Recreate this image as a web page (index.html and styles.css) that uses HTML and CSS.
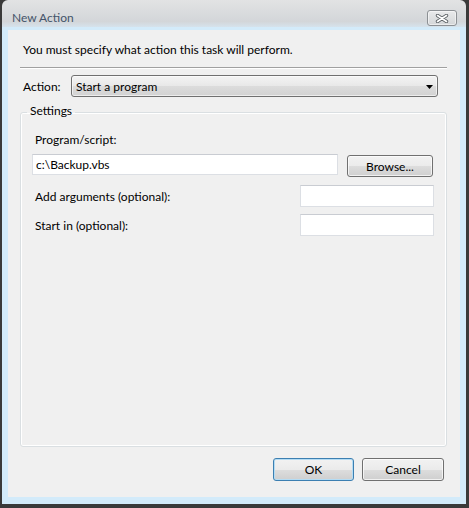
FILE: index.html
```html
<!DOCTYPE html>
<html lang="en">
<head>
<meta charset="utf-8">
<title>New Action</title>
<link rel="stylesheet" href="styles.css">
</head>
<body>
<div class="window">
  <div class="titlebar">
    <span class="title">New Action</span>
    <button class="close" aria-label="Close">
      <svg width="14" height="9" viewBox="0 0 14 9">
        <path d="M2.5 1.5 L11.5 7.5 M11.5 1.5 L2.5 7.5" stroke="#5f6468" stroke-width="3.4" stroke-linecap="round" fill="none"/>
        <path d="M2.5 1.5 L11.5 7.5 M11.5 1.5 L2.5 7.5" stroke="#ffffff" stroke-width="1.6" stroke-linecap="round" fill="none"/>
      </svg>
    </button>
  </div>
  <div class="frame">
    <div class="client">
      <p class="intro">You must specify what action this task will perform.</p>
      <hr class="sep">
      <div class="action-row">
        <span class="action-label">Action:</span>
        <div class="combo">
          <span>Start a program</span>
          <svg class="arrow" width="7" height="4" viewBox="0 0 7 4"><polygon points="0,0 7,0 3.5,4" fill="#000"/></svg>
        </div>
      </div>
      <fieldset class="group">
        <legend>Settings</legend>
        <div class="field-label">Program/script:</div>
        <div class="prog-row">
          <input class="input wide" type="text" value="c:\Backup.vbs">
          <button class="btn browse">Browse...</button>
        </div>
        <div class="opt-row">
          <span class="opt-label">Add arguments (optional):</span>
          <input class="input short" type="text" value="">
        </div>
        <div class="opt-row second">
          <span class="opt-label">Start in (optional):</span>
          <input class="input short" type="text" value="">
        </div>
      </fieldset>
      <div class="buttons">
        <button class="btn ok">OK</button>
        <button class="btn cancel">Cancel</button>
      </div>
    </div>
  </div>
</div>
</body>
</html>
```

FILE: styles.css
```css
html, body {
  margin: 0;
  padding: 0;
  background: #3a3a3a;
  height: 100%;
}

body {
  font-family: Lato, "Liberation Sans", sans-serif;
  font-size: 12px;
  line-height: 15px;
  color: #000;
}

.window {
  margin: 0 3px 0 2px;
  height: 504px;
  display: flex;
  flex-direction: column;
  border-radius: 6px 6px 0 0;
  overflow: hidden;
}

.titlebar {
  height: 27px;
  flex: none;
  display: flex;
  justify-content: space-between;
  align-items: flex-start;
  padding: 0 9px 0 10px;
  background: linear-gradient(#e2e3e4, #d3d6d9 80%, #d6e3ec);
  box-sizing: border-box;
}

.title {
  margin-top: 10px;
  color: #44546a;
  font-size: 12px;
}

.close {
  margin: 10px 0 0 0;
  width: 30px;
  height: 16px;
  padding: 0;
  border: 1px solid #8c9094;
  border-radius: 3px;
  background: linear-gradient(#e9eaeb, #d4d6d8);
  box-shadow: inset 0 0 0 1px rgba(255,255,255,0.5);
  display: flex;
  align-items: center;
  justify-content: center;
}

.close svg {
  display: block;
}

.frame {
  flex: 1;
  display: flex;
  padding: 3px 6px 7px 6px;
  background: #d3ebfa;
}

.client {
  flex: 1;
  display: flex;
  flex-direction: column;
  background: #f0f0f0;
}

.intro {
  margin: 0;
  padding: 12px 0 0 15px;
}

.sep {
  margin: 10px 13px 0 12px;
  height: 0;
  border: 0;
  border-top: 1px solid #a0a0a0;
  border-bottom: 1px solid #ffffff;
}

.action-row {
  margin-top: 6px;
  display: flex;
  align-items: center;
  height: 22px;
}

.action-label {
  width: 48px;
  padding-left: 15px;
  flex: none;
}

.combo {
  width: 367px;
  height: 22px;
  box-sizing: border-box;
  border: 1px solid #707070;
  border-radius: 3px;
  background: linear-gradient(#f4f4f4, #e8e8e8 50%, #dcdcdc 51%, #d2d2d2);
  box-shadow: inset 0 0 0 1px rgba(255,255,255,0.6);
  display: flex;
  align-items: center;
  justify-content: space-between;
  padding: 0 4px 0 4px;
}

.arrow {
  display: block;
  margin-top: 1px;
}

.group {
  flex: 1;
  min-height: 0;
  min-width: 0;
  margin: 6px 13px 0 12px;
  padding: 10px 12px 0 6px;
  border: 1px solid #dadfe2;
  border-radius: 3px;
  box-shadow: inset 0 0 0 1px #ffffff;
}

.group legend {
  padding: 0 3px 4px 3px;
  margin: 0;
  line-height: 15px;
}

.field-label {
  margin-left: 8px;
}

.prog-row {
  margin: 7px 0 0 5px;
  display: flex;
  align-items: flex-start;
}

.input {
  box-sizing: border-box;
  margin: 0;
  border: 1px solid #dcdfe4;
  border-top-color: #c9ccd2;
  background: #fff;
  font: inherit;
  color: #000;
  padding: 0 3px;
  outline: none;
}

.wide {
  width: 306px;
  height: 21px;
}

.short {
  width: 134px;
  height: 22px;
}

.btn {
  box-sizing: border-box;
  font: inherit;
  color: #000;
  padding: 0;
  margin: 0;
  height: 23px;
  border: 1px solid #707070;
  border-radius: 3px;
  background: linear-gradient(#f2f2f2, #ebebeb 50%, #dddddd 51%, #cfcfcf);
  box-shadow: inset 0 0 0 1px rgba(255,255,255,0.7);
}

.browse {
  width: 86px;
  height: 22px;
  margin: 1px 0 0 9px;
}

.opt-row {
  margin-top: 8px;
  display: flex;
  justify-content: space-between;
  align-items: center;
}

.opt-row.second {
  margin-top: 7px;
}

.opt-label {
  margin-left: 8px;
}

.buttons {
  margin-top: 11px;
  padding: 0 16px 16px 0;
  display: flex;
  justify-content: flex-end;
  gap: 8px;
}

.ok {
  width: 81px;
  border-color: #3c7fb1;
  box-shadow: inset 0 0 0 1px #b4dcf4;
}

.cancel {
  width: 82px;
}
```
